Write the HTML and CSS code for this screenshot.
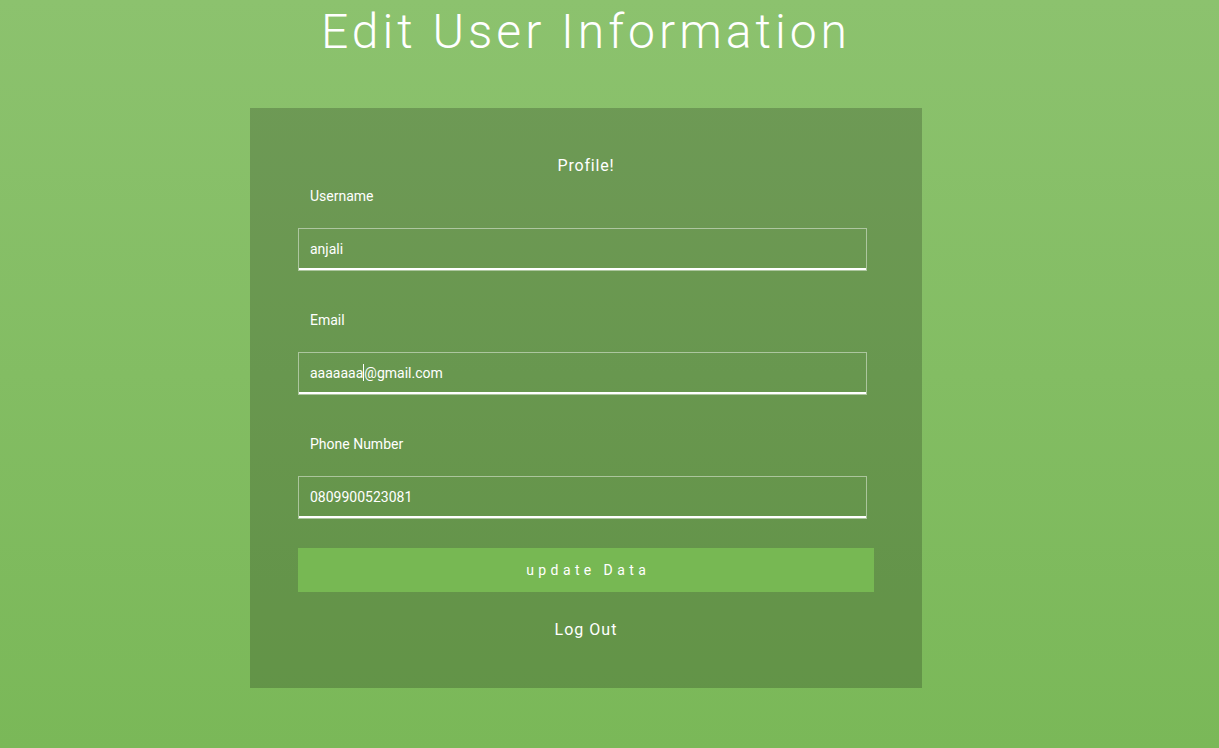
FILE: index.html
```html
<!DOCTYPE html>
<html>
<head>
<meta charset="utf-8">
<title>Edit User Information</title>
<link rel="stylesheet" href="styles.css">
</head>
<body>
<div class="page">
  <h1 class="title">Edit User Information</h1>
  <form class="card">
    <div class="card-head">Profile!</div>
    <div class="field">
      <label class="label">Username</label>
      <div class="input">anjali</div>
    </div>
    <div class="field">
      <label class="label">Email</label>
      <div class="input">aaaaaaa<span class="caret"></span>@gmail.com</div>
    </div>
    <div class="field field-last">
      <label class="label">Phone Number</label>
      <div class="input">0809900523081</div>
    </div>
    <button type="button" class="btn">update Data</button>
    <div class="logout">Log Out</div>
  </form>
</div>
</body>
</html>
```
FILE: styles.css
```css
html, body {
  margin: 0;
  padding: 0;
}
body {
  min-height: 748px;
  background: linear-gradient(to bottom, #8cc26e 0%, #7ab858 100%);
  font-family: Roboto, "Liberation Sans", sans-serif;
  color: #fff;
}
.page {
  width: 672px;
  margin-left: 250px;
  display: flex;
  flex-direction: column;
}
.title {
  margin: 0;
  padding-top: 2px;
  height: 106px;
  text-align: center;
  font-weight: 300;
  font-size: 48px;
  line-height: 60px;
  letter-spacing: 4px;
}
.card {
  background: rgba(0, 0, 0, 0.2);
  height: 580px;
  box-sizing: border-box;
  padding: 48px 48px 0 48px;
  display: flex;
  flex-direction: column;
}
.card-head {
  text-align: center;
  font-size: 16px;
  line-height: 20px;
  letter-spacing: 0.8px;
  margin-bottom: 12px;
}
.field {
  display: flex;
  flex-direction: column;
  margin-bottom: 41px;
}
.field-last {
  margin-bottom: 29px;
}
.label {
  font-size: 14px;
  line-height: 16px;
  padding-left: 12px;
  margin-bottom: 24px;
}
.input {
  width: 569px;
  height: 43px;
  box-sizing: border-box;
  border: 1px solid rgba(255, 255, 255, 0.45);
  box-shadow: inset 0 -2px 0 #fff;
  padding: 0 11px;
  font-size: 14px;
  line-height: 40px;
}
.caret {
  display: inline-block;
  width: 1px;
  height: 17px;
  background: #fff;
  vertical-align: -3px;
}
.btn {
  width: 576px;
  height: 44px;
  border: 0;
  background: #77b853;
  color: #fff;
  font-family: Roboto, "Liberation Sans", sans-serif;
  font-size: 14px;
  letter-spacing: 4.4px;
  text-indent: 4.4px;
  padding: 0;
  cursor: pointer;
}
.logout {
  margin-top: 28px;
  text-align: center;
  font-size: 16px;
  letter-spacing: 1px;
  line-height: 20px;
}
```
